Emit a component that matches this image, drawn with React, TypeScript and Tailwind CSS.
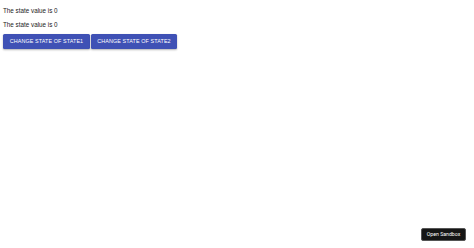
import React, { useState } from "react";

export default function App() {
  const [s1, setS1] = useState(0);
  const [s2, setS2] = useState(0);
  return (
    <div className="min-h-[248px] w-full bg-white relative" style={{ fontFamily: "'Liberation Sans', Arial, sans-serif" }}>
      <div className="flex flex-col items-start pl-[3px] pt-[6.5px]">
        <p className="text-[6.3px] leading-[7.2px] text-[#222]">The state value is {s1}</p>
        <p className="mt-[6.8px] text-[6.3px] leading-[7.2px] text-[#222]">The state value is {s2}</p>
        <div className="mt-[6px] flex gap-[1px]">
          <button
            onClick={() => setS1(s1 + 1)}
            className="h-[15px] w-[87px] rounded-[1.5px] bg-[#3f51b5] text-[5.4px] font-normal uppercase tracking-[0.1px] text-white shadow-[0_1px_2px_rgba(0,0,0,0.3)]"
            style={{ fontFamily: "'Liberation Sans', Arial, sans-serif" }}
          >
            Change state of state1
          </button>
          <button
            onClick={() => setS2(s2 + 1)}
            className="h-[15px] w-[86px] rounded-[1.5px] bg-[#3f51b5] text-[5.4px] font-normal uppercase tracking-[0.1px] text-white shadow-[0_1px_2px_rgba(0,0,0,0.3)]"
            style={{ fontFamily: "'Liberation Sans', Arial, sans-serif" }}
          >
            Change state of state2
          </button>
        </div>
      </div>
      <button
        className="fixed bottom-[7px] right-[8px] flex h-[13px] w-[45px] items-center justify-center rounded-[2px] border border-[#555] bg-[#151515] text-[5.2px] text-white"
        style={{ fontFamily: "Roboto, 'Liberation Sans', sans-serif" }}
      >
        Open Sandbox
      </button>
    </div>
  );
}
